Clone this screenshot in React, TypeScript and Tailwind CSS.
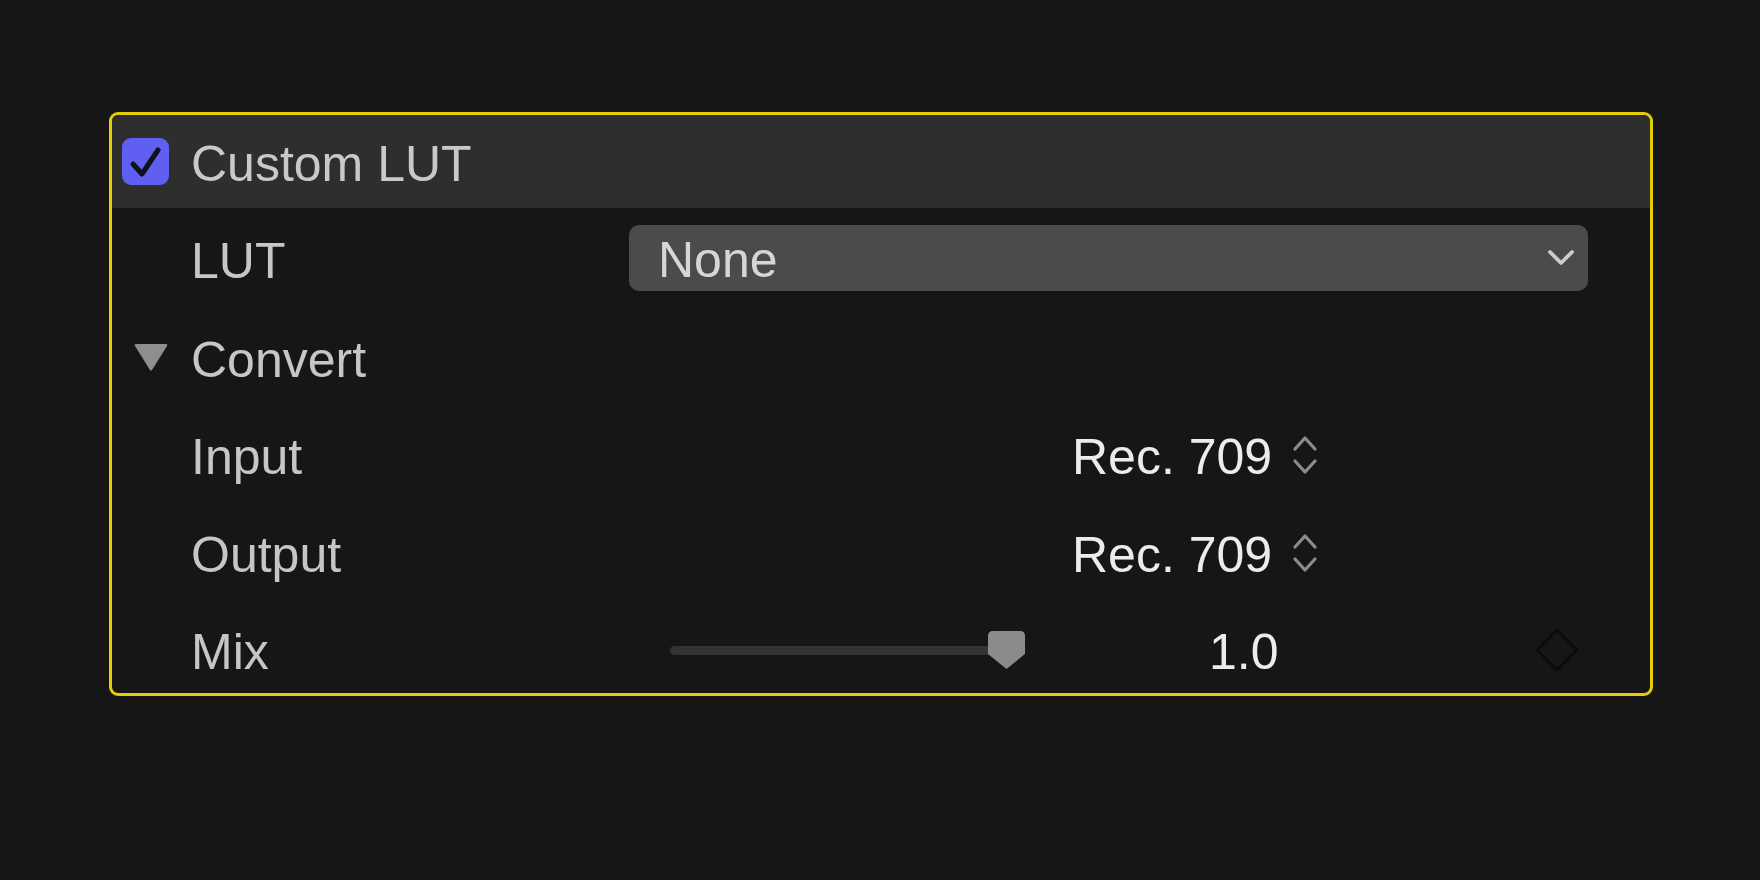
import type { ReactNode } from "react";

const font = { fontFamily: '"Liberation Sans", Arial, sans-serif' };

const Row = ({
  label,
  height,
  children,
}: {
  label: string;
  height: string;
  children?: ReactNode;
}) => (
  <div className={`flex items-center pl-[79px] shrink-0 ${height}`}>
    <span className="w-[438px] shrink-0 pt-[4px] text-[50px] leading-none text-[#c6c6c6]">
      {label}
    </span>
    <div className="flex flex-1 items-center">{children}</div>
  </div>
);

const UpDown = () => (
  <svg width="26" height="40" viewBox="0 0 26 40" fill="none">
    <path
      d="M3 14 L13 3 L23 14 M3 26 L13 37 L23 26"
      stroke="#8c8c8c"
      strokeWidth="3.2"
      strokeLinecap="round"
      strokeLinejoin="round"
    />
  </svg>
);

const PopupValue = ({ value }: { value: string }) => (
  <div className="ml-[443px] flex items-center gap-[20px]">
    <span className="pt-[4px] text-[50px] leading-none text-[#ececec]">
      {value}
    </span>
    <UpDown />
  </div>
);

export default function App() {
  return (
    <div
      className="w-[1760px] h-[880px] bg-[#161616] pt-[112px] pl-[109px]"
      style={font}
    >
      <div className="w-[1544px] h-[584px] overflow-hidden rounded-[9px] border-[3px] border-[#e4cc06] bg-[#161616] flex flex-col">
        {/* header */}
        <div className="flex h-[93px] shrink-0 items-center gap-[22px] rounded-t-[6px] bg-[#2e2e2e] pl-[10px]">
          <div className="flex h-[47px] w-[47px] items-center justify-center rounded-[9px] bg-[#5f5ff2]">
            <svg width="47" height="47" viewBox="0 0 47 47" fill="none">
              <path
                d="M11 26 L20 36 L36 12"
                stroke="#111118"
                strokeWidth="5"
                strokeLinecap="round"
                strokeLinejoin="round"
              />
            </svg>
          </div>
          <span className="pt-[4px] text-[50px] leading-none text-[#c9c9c9]">
            Custom LUT
          </span>
        </div>

        <Row label="LUT" height="h-[101px]">
          <div className="flex h-[66px] w-[959px] items-center justify-between rounded-[10px] bg-[#4b4b4b] pl-[29px] pr-[13px] -mt-[2px]">
            <span className="pt-[4px] text-[50px] leading-none text-[#d6d6d6]">
              None
            </span>
            <svg width="28" height="18" viewBox="0 0 28 18" fill="none">
              <path
                d="M3 3 L14 14 L25 3"
                stroke="#cccccc"
                strokeWidth="3.8"
                strokeLinecap="round"
                strokeLinejoin="round"
              />
            </svg>
          </div>
        </Row>

        {/* convert group */}
        <div className="flex h-[97px] shrink-0 items-center gap-[23px] pl-[22px]">
          <svg width="34" height="28" viewBox="0 0 34 28" className="-mt-[1px]">
            <path d="M2 1 H32 Q34 1 33 3 L18 27 Q17 28 16 27 L1 3 Q0 1 2 1 Z" fill="#8e8e8e" />
          </svg>
          <span className="pt-[4px] text-[50px] leading-none text-[#c6c6c6]">
            Convert
          </span>
        </div>

        <Row label="Input" height="h-[98px]">
          <PopupValue value="Rec. 709" />
        </Row>

        <Row label="Output" height="h-[98px]">
          <PopupValue value="Rec. 709" />
        </Row>

        <Row label="Mix" height="h-[96px]">
          <div className="ml-[41px] flex items-center">
            <div className="h-[9px] w-[322px] rounded-full bg-[#333333]" />
            <svg width="37" height="38" viewBox="0 0 37 38" className="-ml-[4px]">
              <path
                d="M5 0 H32 Q37 0 37 5 V23 L18.5 38 L0 23 V5 Q0 0 5 0 Z"
                fill="#8b8b8b"
              />
            </svg>
          </div>
          <span className="ml-[184px] pt-[4px] text-[50px] leading-none text-[#ececec]">
            1.0
          </span>
          <svg width="44" height="44" viewBox="0 0 44 44" fill="none" className="ml-[256px]">
            <path d="M22 2 L42 22 L22 42 L2 22 Z" stroke="#0a0a0a" strokeWidth="2.5" />
          </svg>
        </Row>
      </div>
    </div>
  );
}
